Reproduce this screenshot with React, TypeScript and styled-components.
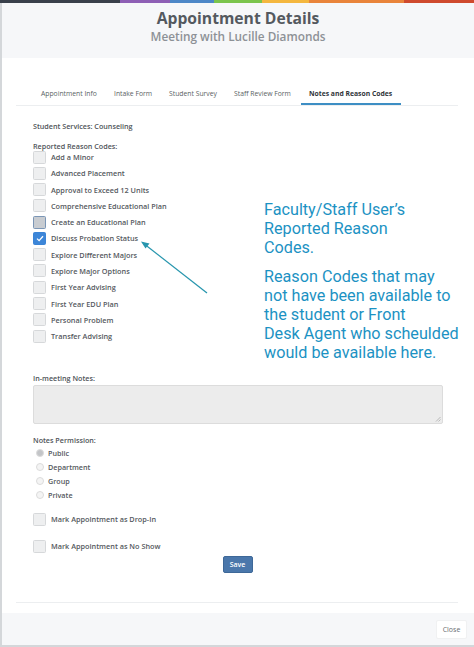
import React from "react";
import styled, { createGlobalStyle } from "styled-components";

const GlobalStyle = createGlobalStyle`
  html, body {
    margin: 0;
    padding: 0;
    background: #d4d7da;
  }
  body {
    font-family: "Open Sans", "DejaVu Sans", sans-serif;
    width: 474px;
    height: 647px;
    overflow: hidden;
  }
`;

const Stripe = styled.div`
  display: flex;
  height: 3px;
`;

const StripeSeg = styled.div<{ $w: number; $c: string }>`
  width: ${(p) => p.$w}px;
  background: ${(p) => p.$c};
`;

const Modal = styled.div`
  position: relative;
  margin-left: 2px;
  background: #fff;
  height: 642px;
  display: flex;
  flex-direction: column;
`;

const Header = styled.div`
  height: 55px;
  background: #f6f7f9;
  display: flex;
  flex-direction: column;
  align-items: center;
  padding-top: 5px;
  box-sizing: border-box;
`;

const Title = styled.h1`
  margin: 0;
  font-size: 15.7px;
  line-height: 20px;
  font-weight: 700;
  color: #54595f;
`;

const Subtitle = styled.h2`
  margin: 0;
  font-size: 11.8px;
  line-height: 16px;
  font-weight: 600;
  color: #8d9196;
`;

const Body = styled.div`
  flex: 1;
  padding: 29px 16px 0 14px;
`;

const Tabs = styled.div`
  display: flex;
  border-bottom: 1px solid #eceef0;
  padding-left: 17px;
`;

const Tab = styled.div<{ $active?: boolean; $w: number }>`
  width: ${(p) => p.$w}px;
  height: 18px;
  box-sizing: border-box;
  font-size: 6.8px;
  line-height: 14px;
  padding-left: 8px;
  color: ${(p) => (p.$active ? "#2f3439" : "#5a5f64")};
  font-weight: ${(p) => (p.$active ? 700 : 400)};
  border-bottom: 2px solid ${(p) => (p.$active ? "#3d8ec4" : "transparent")};
  white-space: nowrap;
`;

const Content = styled.div`
  padding-left: 17px;
`;

const Label = styled.div<{ $top: number }>`
  margin-top: ${(p) => p.$top}px;
  font-size: 7.2px;
  line-height: 10px;
  font-weight: 600;
  color: #4f5459;
`;

const CheckList = styled.div`
  display: flex;
  flex-direction: column;
  margin-top: -2px;
`;

const CheckRow = styled.label<{ $h?: number }>`
  display: flex;
  align-items: center;
  height: ${(p) => p.$h ?? 16.27}px;
  gap: 5px;
  font-size: 7.3px;
  font-weight: 600;
  color: #55595e;
  white-space: nowrap;
`;

const Box = styled.span<{ $state?: "checked" | "focus" }>`
  width: 13px;
  height: 13px;
  box-sizing: border-box;
  border-radius: 1.5px;
  border: 1px solid
    ${(p) =>
      p.$state === "checked"
        ? "#3b84d6"
        : p.$state === "focus"
        ? "#7b96b6"
        : "#d6d8da"};
  background: ${(p) =>
    p.$state === "checked"
      ? "#3d86d8"
      : p.$state === "focus"
      ? "#c8ccd1"
      : "#eeeff0"};
  display: flex;
  align-items: center;
  justify-content: center;
  flex-shrink: 0;
`;

const TextArea = styled.div`
  position: relative;
  margin-top: 2px;
  height: 39px;
  width: 410px;
  box-sizing: border-box;
  background: #ececec;
  border: 1px solid #dcdcdc;
  border-radius: 2px;
`;

const Grip = styled.svg`
  position: absolute;
  right: 1px;
  bottom: 1px;
`;

const RadioList = styled.div`
  display: flex;
  flex-direction: column;
  margin-top: 1px;
`;

const RadioRow = styled.label`
  display: flex;
  align-items: center;
  height: 14px;
  gap: 4px;
  padding-left: 3px;
  font-size: 7.2px;
  font-weight: 600;
  color: #55595e;
`;

const Radio = styled.span<{ $on?: boolean }>`
  width: 6px;
  height: 6px;
  border-radius: 50%;
  border: 1px solid #dcdcdc;
  background: ${(p) => (p.$on ? "#c3c5c8" : "#f4f4f4")};
`;

const Extra = styled.div`
  margin-top: 9px;
  display: flex;
  flex-direction: column;
  gap: 11px;
`;

const SaveWrap = styled.div`
  display: flex;
  justify-content: center;
  padding-right: 16px;
  margin-top: 2px;
`;

const SaveButton = styled.button`
  width: 30px;
  height: 17px;
  padding: 0;
  background: #4a77ab;
  border: 1px solid #3e6898;
  border-radius: 2px;
  color: #fff;
  font-family: "Open Sans", sans-serif;
  font-size: 7px;
  font-weight: 600;
`;

const Divider = styled.div`
  margin-top: 29px;
  border-top: 1px solid #eceef0;
`;

const Footer = styled.div`
  height: 32px;
  background: #f6f7f9;
  display: flex;
  align-items: center;
  justify-content: flex-end;
  padding-right: 7px;
`;

const CloseButton = styled.button`
  width: 31px;
  height: 19px;
  padding: 0;
  background: #fff;
  border: 1px solid #f0f1f2;
  border-radius: 2px;
  color: #6a6e73;
  font-family: "Open Sans", sans-serif;
  font-size: 7px;
`;

const Note = styled.div`
  position: absolute;
  left: 262px;
  top: 197px;
  font-family: Roboto, "Liberation Sans", sans-serif;
  color: #1c92c3;
  font-size: 16.2px;
  line-height: 19px;
`;

const NoteBlock = styled.p<{ $top: number }>`
  margin: ${(p) => p.$top}px 0 0 0;
`;

const Arrow = styled.svg`
  position: absolute;
  left: 0;
  top: 0;
  pointer-events: none;
`;

const stripe: [number, string][] = [
  [120, "#39404b"],
  [50, "#8e5fb5"],
  [44, "#4d87c7"],
  [48, "#7bc44c"],
  [47, "#f4b73f"],
  [95, "#e9843b"],
  [70, "#cf4a2e"],
];

const tabs: [string, number][] = [
  ["Appointment Info", 73],
  ["Intake Form", 55],
  ["Student Survey", 65],
  ["Staff Review Form", 75],
  ["Notes and Reason Codes", 100],
];

const codes = [
  "Add a Minor",
  "Advanced Placement",
  "Approval to Exceed 12 Units",
  "Comprehensive Educational Plan",
  "Create an Educational Plan",
  "Discuss Probation Status",
  "Explore Different Majors",
  "Explore Major Options",
  "First Year Advising",
  "First Year EDU Plan",
  "Personal Problem",
  "Transfer Advising",
];

const permissions = ["Public", "Department", "Group", "Private"];

function Check() {
  return (
    <svg width="8" height="7" viewBox="0 0 8 7">
      <path d="M1 3.6 L3.1 5.6 L7 1.2" fill="none" stroke="#fff" strokeWidth="1.3" />
    </svg>
  );
}

export default function App(): JSX.Element {
  return (
    <>
      <GlobalStyle />
      <Stripe>
        {stripe.map(([w, c]) => (
          <StripeSeg key={c} $w={w} $c={c} />
        ))}
      </Stripe>
      <Modal>
        <Header>
          <Title>Appointment Details</Title>
          <Subtitle>Meeting with Lucille Diamonds</Subtitle>
        </Header>
        <Body>
          <Tabs>
            {tabs.map(([t, w], i) => (
              <Tab key={t} $w={w} $active={i === tabs.length - 1}>
                {t}
              </Tab>
            ))}
          </Tabs>
          <Content>
            <Label $top={15}>Student Services: Counseling</Label>
            <Label $top={10}>Reported Reason Codes:</Label>
            <CheckList>
              {codes.map((c) => (
                <CheckRow key={c}>
                  <Box
                    $state={
                      c === "Discuss Probation Status"
                        ? "checked"
                        : c === "Create an Educational Plan"
                        ? "focus"
                        : undefined
                    }
                  >
                    {c === "Discuss Probation Status" && <Check />}
                  </Box>
                  {c}
                </CheckRow>
              ))}
            </CheckList>
            <Label $top={29}>In-meeting Notes:</Label>
            <TextArea>
              <Grip width="6" height="6" viewBox="0 0 6 6">
                <path d="M1 5.5 L5.5 1 M3.5 5.5 L5.5 3.5" stroke="#999" strokeWidth="0.6" />
              </Grip>
            </TextArea>
            <Label $top={11}>Notes Permission:</Label>
            <RadioList>
              {permissions.map((p, i) => (
                <RadioRow key={p}>
                  <Radio $on={i === 0} />
                  {p}
                </RadioRow>
              ))}
            </RadioList>
            <Extra>
              <CheckRow $h={16}>
                <Box />
                Mark Appointment as Drop-In
              </CheckRow>
              <CheckRow $h={16}>
                <Box />
                Mark Appointment as No Show
              </CheckRow>
            </Extra>
            <SaveWrap>
              <SaveButton>Save</SaveButton>
            </SaveWrap>
          </Content>
          <Divider />
        </Body>
        <Footer>
          <CloseButton>Close</CloseButton>
        </Footer>
        <Note>
          <NoteBlock $top={0}>
            Faculty/Staff User’s
            <br />
            Reported Reason
            <br />
            Codes.
          </NoteBlock>
          <NoteBlock $top={10}>
            Reason Codes that may
            <br />
            not have been available to
            <br />
            the student or Front
            <br />
            Desk Agent who scheulded
            <br />
            would be available here.
          </NoteBlock>
        </Note>
        <Arrow width="474" height="642" viewBox="0 0 474 642">
          <line x1="205" y1="290" x2="141" y2="240" stroke="#2796ae" strokeWidth="1.2" />
          <path d="M139 238.5 L147.5 240.5 L143.5 245.5 Z" fill="#2796ae" />
        </Arrow>
      </Modal>
    </>
  );
}
